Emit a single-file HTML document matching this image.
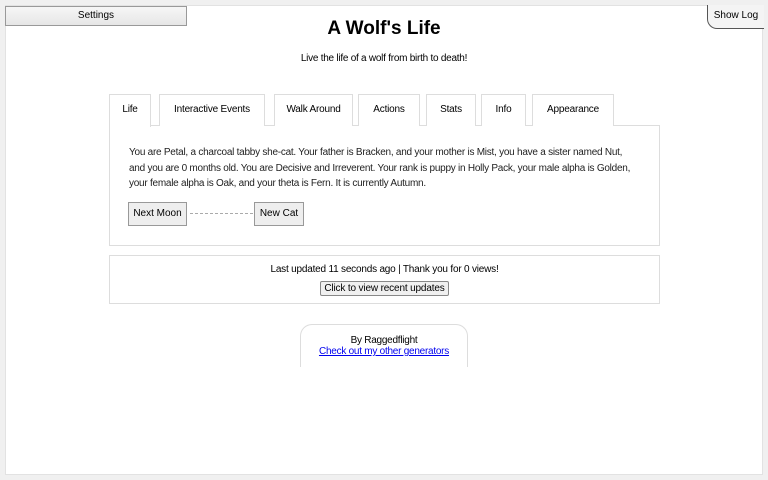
<!DOCTYPE html>
<html><head><meta charset="utf-8"><style>
*{box-sizing:border-box;margin:0;padding:0}
body{width:768px;height:480px;background:#f0f0f0;font-family:"Liberation Sans",sans-serif;color:#000;position:relative;overflow:hidden}
#page{position:absolute;left:5px;top:5px;width:758px;height:470px;background:#fff;border:1px solid #e2e2e2}
.abs{position:absolute}
#settings{left:5px;top:6px;width:182px;height:20px;background:linear-gradient(#f6f6f6,#e6e6e6);border:1px solid #999;font-size:10px;text-align:center;line-height:18px}
#log{left:707px;top:5px;width:57px;height:24px;background:#f4f4f4;border:1px solid #555;border-top:none;border-right:none;border-radius:0 0 0 10px;font-size:10px;line-height:21px;text-align:center}
h1{position:absolute;left:0;width:768px;top:18px;text-align:center;font-size:19px;font-weight:bold}
#sub{top:53px;left:0;width:768px;text-align:center;font-size:10px;letter-spacing:-0.25px}
.tab{position:absolute;top:94px;height:32px;border:1px solid #ddd;border-bottom:none;background:#fff;font-size:10px;text-align:center;line-height:30px;letter-spacing:-0.2px}
#panel{left:109px;top:125px;width:551px;height:121px;border:1px solid #ddd}
#txt{left:129px;top:145px;width:505px;font-size:10px;line-height:15.5px;letter-spacing:-0.25px;color:#222}
.btn{position:absolute;top:202px;height:24px;border:1px solid #999;background:#eee;font-size:10px;line-height:22px;text-align:center}
#dash{left:190px;top:213px;width:63px;border-top:1px dashed #aaa}
#upd{left:109px;top:255px;width:551px;height:49px;border:1px solid #ddd}
#updt{left:109px;width:551px;top:264px;text-align:center;font-size:10px;letter-spacing:-0.2px}
#recent{left:320px;top:281px;width:129px;height:15px;border:1px solid #888;background:#f0f0f0;font-size:10px;line-height:13px;text-align:center;border-radius:2px;letter-spacing:-0.15px}
#cred{left:300px;top:324px;width:168px;height:43px;border:1px solid #ddd;border-bottom:none;border-radius:12px 12px 0 0;font-size:10px;text-align:center;padding-top:10px;line-height:11px;letter-spacing:-0.25px}
#cred a{color:#00e;text-decoration:underline}
</style></head><body>
<div id="page"></div>
<div id="settings" class="abs">Settings</div>
<div id="log" class="abs">Show Log</div>
<h1>A Wolf's Life</h1>
<div id="sub" class="abs">Live the life of a wolf from birth to death!</div>
<div id="panel" class="abs"></div>
<div class="tab" style="left:109px;width:42px;height:33px">Life</div>
<div class="tab" style="left:159px;width:106px">Interactive Events</div>
<div class="tab" style="left:274px;width:79px">Walk Around</div>
<div class="tab" style="left:358px;width:62px">Actions</div>
<div class="tab" style="left:426px;width:50px">Stats</div>
<div class="tab" style="left:481px;width:45px">Info</div>
<div class="tab" style="left:532px;width:82px">Appearance</div>
<div id="txt" class="abs">You are Petal, a charcoal tabby she-cat. Your father is Bracken, and your mother is Mist, you have a sister named Nut, and you are 0 months old. You are Decisive and Irreverent. Your rank is puppy in Holly Pack, your male alpha is Golden, your female alpha is Oak, and your theta is Fern. It is currently Autumn.</div>
<div class="btn" style="left:128px;width:59px">Next Moon</div>
<div id="dash" class="abs"></div>
<div class="btn" style="left:254px;width:50px">New Cat</div>
<div id="upd" class="abs"></div>
<div id="updt" class="abs">Last updated 11 seconds ago | Thank you for 0 views!</div>
<div id="recent" class="abs">Click to view recent updates</div>
<div id="cred" class="abs">By Raggedflight<br><a>Check out my other generators</a></div>
</body></html>
